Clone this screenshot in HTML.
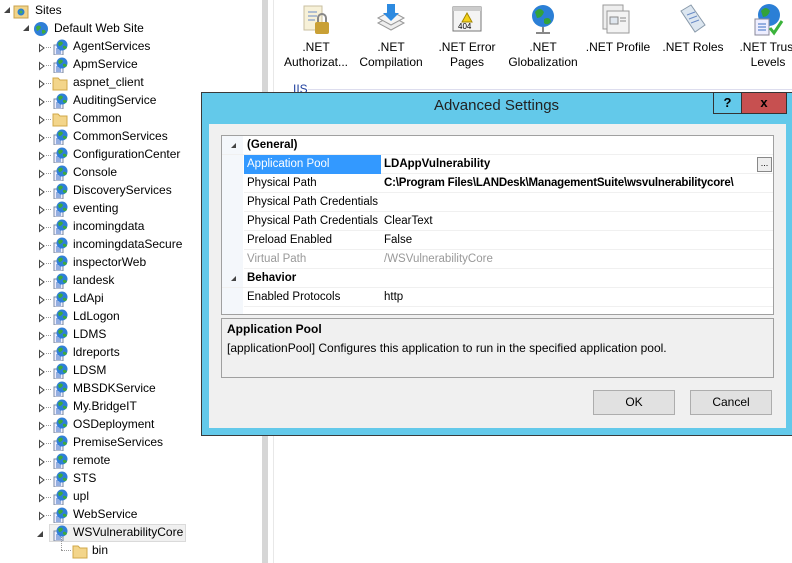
<!DOCTYPE html>
<html><head><meta charset="utf-8"><style>
*{margin:0;padding:0;box-sizing:border-box}
body{width:792px;height:563px;overflow:hidden;background:#fff;font-family:"Liberation Sans",sans-serif;font-size:12px;color:#000;position:relative}
.a{position:absolute;white-space:nowrap}
.tri{position:absolute;width:6px;height:10px}
.exp{position:absolute;width:0;height:0;border-left:6px solid transparent;border-bottom:6px solid #444}
.dot{position:absolute;border-top:1px dotted #999;width:6px}
.ico{position:absolute;width:16px;height:16px}
.icon{position:absolute;width:30px;height:34px}
.lab{position:absolute;text-align:center;width:80px;line-height:15px}
.row{position:absolute;left:22px;right:0;height:19px;border-bottom:1px solid #f0f0f0;font-size:11.5px}
.row span{position:absolute;top:3px}
.btn{position:absolute;height:25px;width:82px;background:#e1e1e1;border:1px solid #adadad;text-align:center;line-height:23px}
</style></head><body>
<div class="exp" style="left:4px;top:7px"></div>
<div class="ico" style="left:13px;top:3px"><svg width="16" height="16"><rect x="1" y="3" width="14" height="12" fill="#f1d48a" stroke="#c9a24c"/><circle cx="8" cy="9" r="3.5" fill="#2a80d0"/><circle cx="8" cy="9" r="1.5" fill="#4caf50"/></svg></div>
<div class="a" style="left:35px;top:3px">Sites</div>
<div class="exp" style="left:23px;top:25px"></div>
<div class="ico" style="left:33px;top:21px"><svg width="16" height="16"><circle cx="8" cy="8" r="7" fill="#2f7fd8"/><path d="M3 6 Q6 3 8 6 Q7 9 4 10Z M9 9 Q12 8 13 11 Q10 14 9 12Z" fill="#3daa3d"/></svg></div>
<div class="a" style="left:54px;top:21px">Default Web Site</div>
<div class="a" style="left:49px;top:524px;width:137px;height:18px;background:#f0f0f0;border:1px solid #dadada"></div>
<div id="items"></div>
<div class="a" style="left:262px;top:0;width:6px;height:563px;background:#d6d6d6"></div>
<div class="a" style="left:273px;top:0;width:1px;height:563px;background:#e8e8e8"></div>
<div class="icon" style="left:302px;top:4px"><svg width="30" height="34"><rect x="2" y="2" width="18" height="24" fill="#f7f1d8" stroke="#c9bfa0"/><path d="M6 8h9M6 12h9M6 16h7" stroke="#6a8cc7"/><rect x="13" y="18" width="14" height="12" rx="2" fill="#c9a035"/><path d="M16 18v-4a4 4 0 0 1 8 0v4" stroke="#888" stroke-width="2" fill="none"/></svg></div>
<div class="icon" style="left:376px;top:3px"><svg width="30" height="34"><path d="M2 20l13-7 13 7-13 7z" fill="#eee" stroke="#999"/><path d="M2 15l13-7 13 7-13 7z" fill="#f5f5f5" stroke="#999"/><path d="M11 1h8v9h4l-8 8-8-8h4z" fill="#2d8ae0"/></svg></div>
<div class="icon" style="left:452px;top:6px"><svg width="30" height="30"><rect x="1" y="1" width="28" height="24" fill="#f4f4f4" stroke="#777"/><rect x="1" y="1" width="28" height="4" fill="#ccc"/><path d="M15 7l5 9h-10z" fill="#f4d11a" stroke="#a58800"/><text x="6" y="23" font-size="8" font-family="Liberation Sans">404</text></svg></div>
<div class="icon" style="left:528px;top:3px"><svg width="30" height="34"><circle cx="15" cy="13" r="11" fill="#2b7fd6"/><path d="M7 9q5-6 9 0q-2 6-7 6z M16 16q6-3 7 3q-4 4-7 1z" fill="#33a23a"/><path d="M8 30h14M15 24v6" stroke="#888" stroke-width="2"/></svg></div>
<div class="icon" style="left:600px;top:3px"><svg width="34" height="34"><rect x="3" y="2" width="20" height="24" fill="#eee" stroke="#999"/><rect x="7" y="8" width="22" height="22" fill="#f3f3f3" stroke="#999"/><rect x="10" y="14" width="8" height="7" fill="#dfe6ee" stroke="#888"/><path d="M20 15h6M20 18h6" stroke="#888"/></svg></div>
<div class="icon" style="left:677px;top:3px"><svg width="32" height="34"><path d="M4 8l10-6 14 20-10 7z" fill="#dce6f0" stroke="#8899aa"/><path d="M10 12l8 -3M12 16l8-3M14 20l8-3" stroke="#6a8cc7"/></svg></div>
<div class="icon" style="left:752px;top:3px"><svg width="34" height="34"><circle cx="17" cy="12" r="11" fill="#2b7fd6"/><path d="M9 8q5-6 9 0q-2 6-7 6z" fill="#33a23a"/><rect x="3" y="16" width="14" height="16" fill="#eef" stroke="#889"/><path d="M6 21h8M6 24h8M6 27h8" stroke="#3a6fc0"/><path d="M18 25l4 5 8-12" stroke="#3bb33b" stroke-width="3" fill="none"/></svg></div>
<div class="lab" style="left:276px;top:40px">.NET<br>Authorizat...</div>
<div class="lab" style="left:351px;top:40px">.NET<br>Compilation</div>
<div class="lab" style="left:427px;top:40px">.NET Error<br>Pages</div>
<div class="lab" style="left:503px;top:40px">.NET<br>Globalization</div>
<div class="lab" style="left:578px;top:40px">.NET Profile</div>
<div class="lab" style="left:653px;top:40px">.NET Roles</div>
<div class="lab" style="left:728px;top:40px">.NET Trust<br>Levels</div>
<div class="a" style="left:293px;top:82px;color:#1e3f9e">IIS</div>
<div class="a" style="left:308px;top:89px;width:484px;height:1px;background:#dde"></div>
<div class="a" style="left:201px;top:92px;width:591px;height:344px;background:#63c9ea;border:1px solid #3a3a3a;border-right:none"></div>
<div class="a" style="left:201px;top:97px;width:591px;text-align:center;font-size:15px;color:#222">Advanced Settings</div>
<div class="a" style="left:713px;top:92px;width:29px;height:22px;border:1px solid #333;text-align:center;font-weight:bold;font-size:13px;line-height:20px">?</div>
<div class="a" style="left:741px;top:92px;width:46px;height:22px;background:#c75050;border:1px solid #333;text-align:center;font-weight:bold;font-size:13px;line-height:20px">x</div>
<div class="a" style="left:209px;top:124px;width:577px;height:304px;background:#f0f0f0"></div>
<div class="a" style="left:221px;top:135px;width:553px;height:180px;background:#fff;border:1px solid #a0a0a0;overflow:hidden">
 <div class="a" style="left:0;top:0;width:21px;height:180px;background:#f4f7fb"></div>
 <div class="row" style="top:0;left:0"><div class="exp" style="left:9px;top:7px;border-left-width:5px;border-bottom-width:5px"></div><span style="left:25px;font-weight:bold">(General)</span></div>
 <div class="row" style="top:19px"><div class="a" style="left:0;top:0;width:137px;height:19px;background:#3399ff"></div><span style="left:3px;color:#fff">Application Pool</span><span style="left:140px;font-weight:bold">LDAppVulnerability</span><div class="a" style="right:1px;top:2px;width:15px;height:15px;border:1px solid #888;background:#eee;font-size:9px;text-align:center;line-height:10px">...</div></div>
 <div class="row" style="top:38px"><span style="left:3px">Physical Path</span><span style="left:140px;font-weight:bold;letter-spacing:-0.2px">C:\Program Files\LANDesk\ManagementSuite\wsvulnerabilitycore\</span></div>
 <div class="row" style="top:57px"><span style="left:3px">Physical Path Credentials</span></div>
 <div class="row" style="top:76px"><span style="left:3px">Physical Path Credentials</span><span style="left:140px">ClearText</span></div>
 <div class="row" style="top:95px"><span style="left:3px">Preload Enabled</span><span style="left:140px">False</span></div>
 <div class="row" style="top:114px;color:#999"><span style="left:3px">Virtual Path</span><span style="left:140px">/WSVulnerabilityCore</span></div>
 <div class="row" style="top:133px;left:0"><div class="exp" style="left:9px;top:7px;border-left-width:5px;border-bottom-width:5px"></div><span style="left:25px;font-weight:bold">Behavior</span></div>
 <div class="row" style="top:152px"><span style="left:3px">Enabled Protocols</span><span style="left:140px">http</span></div>
</div>
<div class="a" style="left:221px;top:318px;width:553px;height:60px;border:1px solid #a0a0a0;background:#f0f0f0">
 <div class="a" style="left:5px;top:3px;font-weight:bold">Application Pool</div>
 <div class="a" style="left:5px;top:22px">[applicationPool] Configures this application to run in the specified application pool.</div>
</div>
<div class="btn" style="left:593px;top:390px">OK</div>
<div class="btn" style="left:690px;top:390px">Cancel</div>
<script>
var it=[["AgentServices",0],["ApmService",0],["aspnet_client",1],["AuditingService",0],["Common",1],["CommonServices",0],["ConfigurationCenter",0],["Console",0],["DiscoveryServices",0],["eventing",0],["incomingdata",0],["incomingdataSecure",0],["inspectorWeb",0],["landesk",0],["LdApi",0],["LdLogon",0],["LDMS",0],["ldreports",0],["LDSM",0],["MBSDKService",0],["My.BridgeIT",0],["OSDeployment",0],["PremiseServices",0],["remote",0],["STS",0],["upl",0],["WebService",0],["WSVulnerabilityCore",2]];
var h="";
var site='<svg width="16" height="16"><rect x="2" y="6" width="9" height="10" fill="#eef" stroke="#7a8aa0"/><path d="M4 10h5M4 12h5M4 14h5" stroke="#3a6fc0"/><circle cx="10" cy="6" r="5.5" fill="#2f7fd8"/><path d="M6 4q3-3 5 0q-1 3-4 3z M11 7q3-1 4 2q-2 2-4 0z" fill="#3daa3d"/></svg>';
var fold='<svg width="16" height="16"><path d="M1 3h5l2 2h7v10H1z" fill="#f3d58a" stroke="#d0a848"/></svg>';
var tri='<svg width="6" height="10"><path d="M0.5 1.5L5 5 0.5 8.5z" fill="#fff" stroke="#444"/></svg>';
for(var i=0;i<it.length;i++){var y=39+i*18;
 if(it[i][1]==2)h+='<div class="exp" style="left:37px;top:'+(y+6)+'px"></div>';
 else h+='<div class="tri" style="left:39px;top:'+(y+3)+'px">'+tri+'</div><div class="dot" style="left:46px;top:'+(y+8)+'px;width:5px"></div>';
 h+='<div class="ico" style="left:52px;top:'+y+'px">'+(it[i][1]==1?fold:site)+'</div>';
 h+='<div class="a" style="left:73px;top:'+y+'px">'+it[i][0]+'</div>';}
var y=543;
h+='<div class="a" style="left:61px;top:'+(y-6)+'px;width:1px;height:13px;border-left:1px dotted #999"></div><div class="dot" style="left:61px;top:'+(y+7)+'px;width:10px"></div>';
h+='<div class="ico" style="left:72px;top:'+y+'px">'+fold+'</div><div class="a" style="left:92px;top:'+y+'px">bin</div>';
document.getElementById("items").innerHTML=h;
</script>
</body></html>
